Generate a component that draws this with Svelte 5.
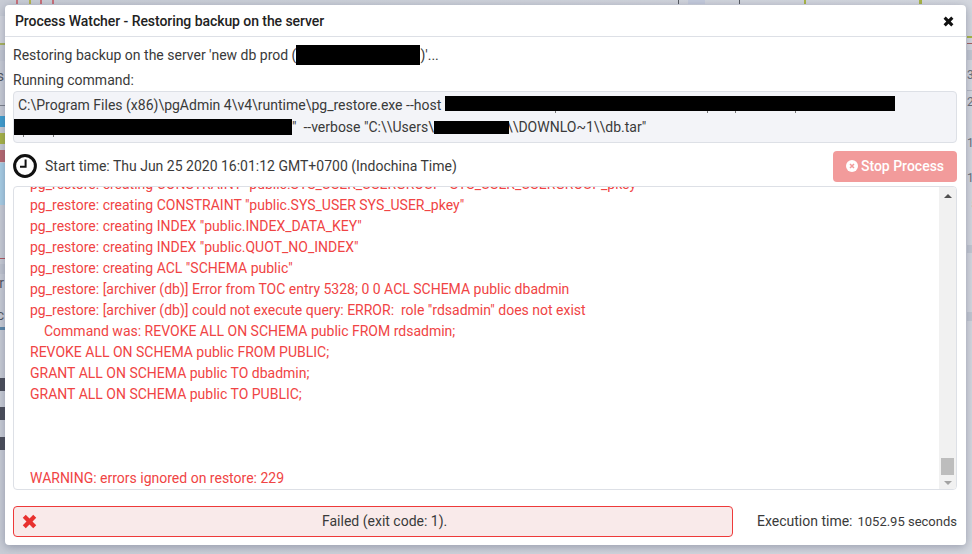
<script lang="ts">
	const logLines = [
		{ text: 'pg_restore: creating CONSTRAINT "public.SYS_USER SYS_USER_pkey"' },
		{ text: 'pg_restore: creating INDEX "public.INDEX_DATA_KEY"' },
		{ text: 'pg_restore: creating INDEX "public.QUOT_NO_INDEX"' },
		{ text: 'pg_restore: creating ACL "SCHEMA public"' },
		{ text: 'pg_restore: [archiver (db)] Error from TOC entry 5328; 0 0 ACL SCHEMA public dbadmin' },
		{ text: 'pg_restore: [archiver (db)] could not execute query: ERROR:  role "rdsadmin" does not exist' },
		{ text: 'Command was: REVOKE ALL ON SCHEMA public FROM rdsadmin;', indent: true },
		{ text: 'REVOKE ALL ON SCHEMA public FROM PUBLIC;' },
		{ text: 'GRANT ALL ON SCHEMA public TO dbadmin;' },
		{ text: 'GRANT ALL ON SCHEMA public TO PUBLIC;' },
		{ text: '' },
		{ text: '' },
		{ text: '' },
		{ text: 'WARNING: errors ignored on restore: 229' }
	];

	// bits of the page behind the dialog that stay visible round its edges
	const behind = [
		{ x: 0, y: 16, w: 5, h: 28, c: '#d3d6dd' },
		{ x: 0, y: 43, w: 5, h: 2, c: '#a9b45c' },
		{ x: 0, y: 50, w: 5, h: 11, c: '#c3c8d2' },
		{ x: 0, y: 105, w: 5, h: 1, c: '#7c808a' },
		{ x: 0, y: 116, w: 5, h: 11, c: '#3f9fd0' },
		{ x: 0, y: 133, w: 5, h: 11, c: '#a9b544' },
		{ x: 0, y: 150, w: 5, h: 12, c: '#b9686f' },
		{ x: 0, y: 163, w: 5, h: 42, c: '#a9cfe6' },
		{ x: 0, y: 258, w: 5, h: 1, c: '#b0555c' },
		{ x: 0, y: 264, w: 5, h: 10, c: '#c0c5cf' },
		{ x: 0, y: 327, w: 5, h: 3, c: '#5b87a8' },
		{ x: 0, y: 378, w: 5, h: 13, c: '#4a4d58' },
		{ x: 0, y: 407, w: 5, h: 13, c: '#4a4d58' },
		{ x: 0, y: 437, w: 5, h: 13, c: '#4a4d58' },
		{ x: 16, y: 0, w: 2, h: 4, c: '#c9707a' },
		{ x: 29, y: 0, w: 2, h: 4, c: '#b5b54f' },
		{ x: 40, y: 0, w: 2, h: 4, c: '#c9707a' },
		{ x: 52, y: 0, w: 2, h: 4, c: '#c9707a' },
		{ x: 678, y: 0, w: 1, h: 4, c: '#55585f' },
		{ x: 688, y: 0, w: 17, h: 4, c: '#c5cbdc' },
		{ x: 739, y: 0, w: 1, h: 4, c: '#55585f' },
		{ x: 804, y: 0, w: 2, h: 4, c: '#a9b544' },
		{ x: 919, y: 0, w: 3, h: 4, c: '#a9b544' },
		{ x: 967, y: 36, w: 5, h: 2, c: '#a9b544' },
		{ x: 967, y: 43, w: 5, h: 1, c: '#a5605f' },
		{ x: 967, y: 50, w: 5, h: 10, c: '#c3c8d2' },
		{ x: 967, y: 90, w: 5, h: 1, c: '#b4b8c2' },
		{ x: 967, y: 245, w: 5, h: 8, c: '#c3c8d2' },
		{ x: 967, y: 312, w: 5, h: 9, c: '#c3c8d2' }
	];
	const axis = [
		{ label: '3', y: 68 },
		{ label: '20', y: 95 },
		{ label: '15', y: 136 },
		{ label: '10', y: 171 },
		{ label: '5', y: 197, x: 971 }
	];
	const sideText = [
		{ label: 's', y: 69 },
		{ label: 'r', y: 276 },
		{ label: 'c', y: 308 }
	];
	const hostMarks = [110, 262, 290, 350];
	const argMarks = [9, 39];
</script>

<div class="backdrop">
	{#each behind as b}
		<div class="behind" style="left:{b.x}px;top:{b.y}px;width:{b.w}px;height:{b.h}px;background:{b.c}"></div>
	{/each}
	{#each axis as a}
		<span class="axis" style="top:{a.y}px;left:{a.x ?? 967}px">{a.label}</span>
	{/each}
	{#each sideText as t}
		<span class="side-text" style="top:{t.y}px">{t.label}</span>
	{/each}

	<div class="modal">
		<header class="modal-head">
			<span class="modal-title">Process Watcher - Restoring backup on the server</span>
			<svg class="close" viewBox="0 0 12 12">
				<path d="M3 .6 6 3.6 9 .6 11.4 3 8.4 6 11.4 9 9 11.4 6 8.4 3 11.4 .6 9 3.6 6 .6 3z" />
			</svg>
		</header>

		<div class="modal-body">
			<div class="desc">Restoring backup on the server 'new db prod (<span class="redact r-server"></span>)'...</div>
			<div class="label">Running command:</div>
			<div class="command">
				<div class="cmd-line">C:\Program Files (x86)\pgAdmin 4\v4\runtime\pg_restore.exe --host <span class="redact r-host">{#each hostMarks as m}<i class="tail" style="left:{m}px"></i>{/each}</span></div>
				<div class="cmd-line"><span class="redact r-args">{#each argMarks as m}<i class="tail" style="left:{m}px"></i>{/each}</span>"  --verbose "C:\\Users\<span class="redact r-user"></span>\\DOWNLO~1\\db.tar"</div>
			</div>

			<div class="status-row">
				<svg class="clock" viewBox="0 0 24 24">
					<circle cx="12" cy="12" r="10.4" />
					<path d="M12.6 5.5v7.2H7" />
				</svg>
				<span class="start-time">Start time: Thu Jun 25 2020 16:01:12 GMT+0700 (Indochina Time)</span>
				<button class="stop" disabled>
					<svg viewBox="0 0 12 12">
						<circle cx="6" cy="6" r="6" fill="#fff" />
						<path d="M4 4l4 4M8 4l-4 4" stroke="#f29b9b" stroke-width="1.5" />
					</svg>
					Stop Process
				</button>
			</div>

			<div class="log">
				<div class="log-view">
					<div class="log-content">
						<div class="log-line">pg_restore: creating CONSTRAINT "public.SYS_USER_USERGROUP" SYS_USER_USERGROUP_pkey"</div>
						{#each logLines as line}
							<div class="log-line" class:indent={line.indent}>{line.text}</div>
						{/each}
					</div>
				</div>
				<div class="scrollbar">
					<span class="arrow up"></span>
					<div class="track"><div class="thumb"></div></div>
					<span class="arrow down"></span>
				</div>
			</div>

			<div class="result-row">
				<div class="result">
					<svg class="fail" viewBox="0 0 12 12">
						<path d="M3 .6 6 3.6 9 .6 11.4 3 8.4 6 11.4 9 9 11.4 6 8.4 3 11.4 .6 9 3.6 6 .6 3z" />
					</svg>
					<span class="result-text">Failed (exit code: 1).</span>
				</div>
				<div class="exec">
					<span>Execution time:</span>
					<span class="exec-value">1052.95 seconds</span>
				</div>
			</div>
		</div>
	</div>
</div>

<style>
	:global(body) {
		margin: 0;
		background: #c6cbd6;
	}
	.backdrop {
		position: relative;
		width: 972px;
		height: 554px;
		box-sizing: border-box;
		padding: 5px 6px 9px 5px;
		background: linear-gradient(90deg, #c9cdd6, #d5d8df);
		overflow: hidden;
		font-family: Roboto, 'Liberation Sans', sans-serif;
		font-size: 14px;
		color: #3a3a3a;
	}
	.behind {
		position: absolute;
	}
	.axis,
	.side-text {
		position: absolute;
		font-size: 12px;
		line-height: 14px;
		color: #6a6e78;
	}
	.side-text {
		right: calc(100% - 4px);
		font-size: 14px;
		color: #50545e;
	}
	.modal {
		position: relative;
		height: 100%;
		display: flex;
		flex-direction: column;
		background: #fff;
		border-radius: 4px;
		box-shadow: 0 2px 10px rgba(60, 70, 100, 0.4);
	}
	.modal-head {
		height: 31px;
		flex: none;
		display: flex;
		align-items: center;
		justify-content: space-between;
		padding: 0 12px 0 10px;
		border-bottom: 1px solid #dde0e6;
	}
	.modal-title {
		font-weight: 500;
		font-size: 14px;
		letter-spacing: -0.07px;
		color: #222;
	}
	.close {
		width: 11px;
		height: 11px;
		fill: #111;
		margin-top: 1px;
	}
	.modal-body {
		flex: 1;
		display: flex;
		flex-direction: column;
		padding: 8px 9px 8px 8px;
		min-height: 0;
	}
	.desc {
		line-height: 21px;
		height: 21px;
	}
	.label {
		margin-top: 4px;
		line-height: 21px;
		height: 21px;
	}
	.redact {
		display: inline-block;
		position: relative;
		background: #000;
	}
	.tail {
		position: absolute;
		top: 100%;
		width: 1px;
		height: 2px;
		background: #777;
	}
	.r-server {
		width: 124px;
		height: 20px;
		vertical-align: -5px;
	}
	.command {
		height: 52px;
		box-sizing: border-box;
		padding: 2px 4px;
		background: #f3f4f8;
		border: 1px solid #dde0e6;
		border-radius: 4px;
	}
	.cmd-line {
		height: 22px;
		line-height: 22px;
		white-space: pre;
	}
	.r-host {
		width: 450px;
		height: 15px;
		vertical-align: -1px;
	}
	.r-args {
		width: 278px;
		height: 16px;
		vertical-align: -3px;
		margin-left: -4px;
	}
	.r-user {
		width: 75px;
		height: 13px;
		vertical-align: -2px;
		margin-right: -2px;
	}
	.status-row {
		margin-top: 8px;
		height: 31px;
		display: flex;
		align-items: center;
		gap: 8px;
	}
	.clock {
		width: 24px;
		height: 24px;
		flex: none;
		fill: none;
		stroke: #111;
		margin-bottom: 2px;
	}
	.clock circle {
		stroke-width: 3;
	}
	.clock path {
		stroke-width: 2;
	}
	.start-time {
		flex: 1;
		padding-bottom: 2px;
	}
	.stop {
		width: 124px;
		height: 31px;
		display: flex;
		align-items: center;
		justify-content: center;
		gap: 3px;
		background: #f29b9b;
		border: 0;
		border-radius: 4px;
		color: #fff;
		font: inherit;
		font-weight: 500;
		padding: 0 0 2px;
	}
	.stop svg {
		width: 12px;
		height: 12px;
	}
	.log {
		margin-top: 4px;
		height: 304px;
		display: flex;
		box-sizing: border-box;
		border: 1px solid #dde0e6;
		border-radius: 4px;
		overflow: hidden;
	}
	.log-view {
		flex: 1;
		overflow: hidden;
		color: #f04444;
	}
	.log-content {
		margin-top: -13px;
		padding-left: 16px;
	}
	.log-line {
		height: 21px;
		line-height: 21px;
		white-space: pre;
	}
	.log-line.indent {
		padding-left: 14px;
	}
	.scrollbar {
		width: 17px;
		flex: none;
		display: flex;
		flex-direction: column;
		align-items: center;
		background: #f1f1f1;
		padding: 7px 0 4px;
		box-sizing: border-box;
	}
	.arrow {
		width: 0;
		height: 0;
		border-left: 4px solid transparent;
		border-right: 4px solid transparent;
	}
	.arrow.up {
		border-bottom: 4px solid #505050;
	}
	.arrow.down {
		border-top: 4px solid #a3a3a3;
	}
	.track {
		flex: 1;
		width: 100%;
		display: flex;
		flex-direction: column;
		justify-content: flex-end;
		padding-bottom: 6px;
	}
	.thumb {
		height: 17px;
		margin: 0 2px;
		background: #bdbdbd;
	}
	.result-row {
		margin-top: 16px;
		display: flex;
		align-items: center;
	}
	.result {
		width: 720px;
		height: 31px;
		box-sizing: border-box;
		display: flex;
		align-items: center;
		background: #f9eaea;
		border: 1px solid #ee3a3a;
		border-radius: 4px;
	}
	.fail {
		width: 15px;
		height: 15px;
		margin-left: 8px;
		fill: #e8312f;
	}
	.result-text {
		margin-left: 285px;
		padding-bottom: 2px;
	}
	.exec {
		margin-left: auto;
		display: flex;
		gap: 5px;
		align-items: baseline;
		padding-bottom: 2px;
	}
	.exec-value {
		font-size: 13px;
	}
</style>
